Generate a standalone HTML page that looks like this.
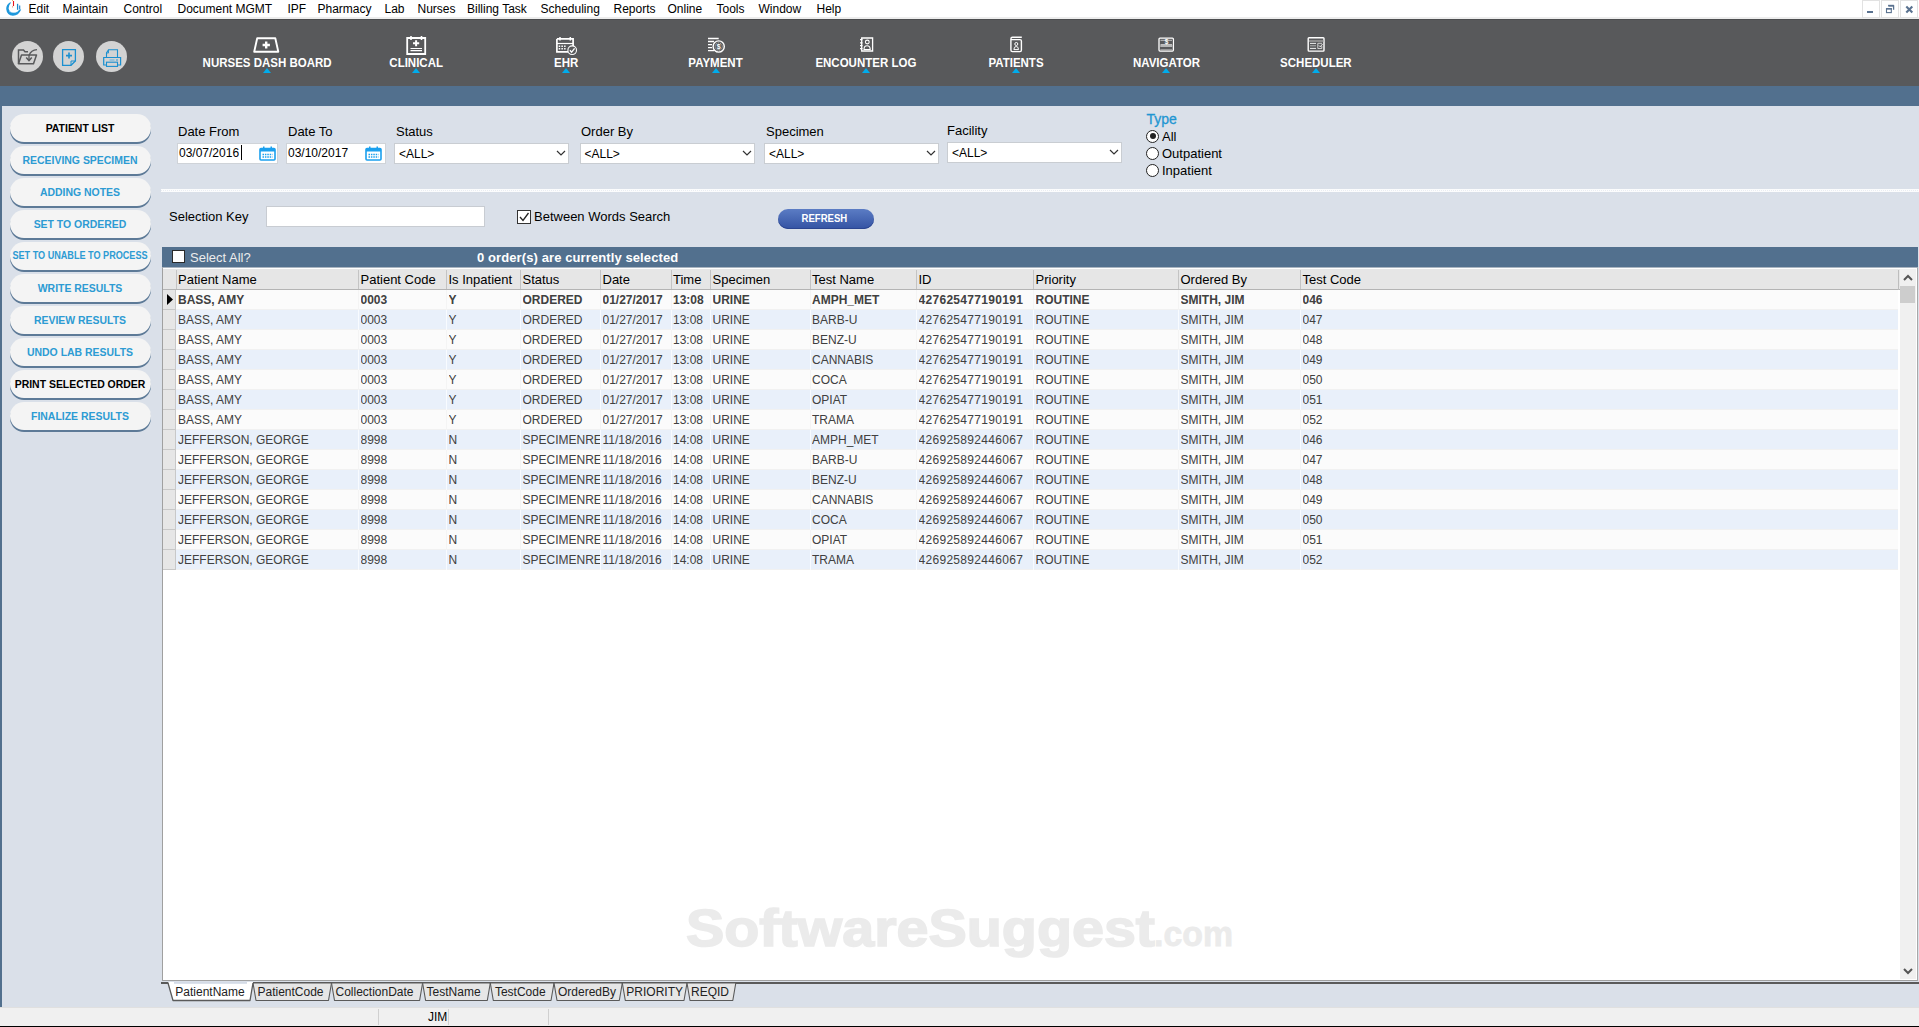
<!DOCTYPE html><html><head><meta charset='utf-8'><style>
*{box-sizing:border-box}
html,body{margin:0;padding:0}
body{width:1919px;height:1027px;overflow:hidden;position:relative;background:#dae0e9;font-family:"Liberation Sans", sans-serif;color:#000}
.a{position:absolute;white-space:nowrap}
.menu{top:1px;height:17px;line-height:17px;font-size:12px;color:#000}
.nav{top:56px;height:14px;line-height:14px;font-size:12.5px;font-weight:bold;color:#fff;transform-origin:center;}
.tri{position:absolute;top:68px;width:0;height:0;border-left:4.5px solid transparent;border-right:4.5px solid transparent;border-bottom:5.5px solid #00acec}
.circ{position:absolute;top:41px;width:31px;height:31px;border-radius:50%;background:#d3d3d3}
.lbtn{position:absolute;white-space:nowrap;left:10px;width:141px;height:28px;border-radius:14px;background:#f4f4f4;box-shadow:0 2px 0 #5d7a97;text-align:center;font-size:11px;font-weight:bold;line-height:28px;color:#2d9bd3}
.lbl{font-size:13px;color:#000;height:16px;line-height:16px}
.inp{position:absolute;height:21px;background:#fff;border:1px solid #cfd3d8}
.sel{position:absolute;height:21px;background:#fff;border:1px solid #c9cdd2;font-size:12px;line-height:20px;padding-left:4px}
.hdr{position:absolute;top:270px;height:20px;line-height:20px;font-size:13px;color:#000}
.cell{position:absolute;height:20px;line-height:20px;font-size:12px;color:#404040}
.tab{position:absolute;top:984px;height:17px;line-height:17px;font-size:12px;color:#222}
</style></head><body>
<div class='a' style='left:0;top:0;width:1919px;height:17px;background:#fff'></div>
<div class='a' style='left:0;top:17px;width:1919px;height:2px;background:#ededed'></div>
<svg class='a' style='left:0;top:0' width='26' height='17' viewBox='0 0 26 17'>
<path d='M10.5 2 Q6 4.5 6.2 9 Q6.8 15.2 13 15.8 Q18.5 15.8 21.2 9.6 L19.6 9.2 Q17.3 12.8 13.2 12.6 Q9 12.2 8.6 8.2 Q8.6 5 10.8 3 Z' fill='#1e98dc'/>
<path d='M17.6 3.8 V9.8' stroke='#1a8ad0' stroke-width='1.3'/>
<path d='M19.7 5.5 V9' stroke='#1a80c8' stroke-width='1.1'/>
<path d='M9 11.5 Q13 13.5 18 11.5' stroke='#fff' stroke-width='0.6' fill='none' opacity='0.7'/>
<path d='M13.5 1 V6' stroke='#e8141c' stroke-width='1.1'/>
<path d='M12.5 0 V1' stroke='#e8a040' stroke-width='0.8'/>
<path d='M12.6 6 V7.6' stroke='#e09070' stroke-width='0.8'/>
</svg>
<div class='a menu' style='left:28.5px'>Edit</div>
<div class='a menu' style='left:62.5px'>Maintain</div>
<div class='a menu' style='left:123.5px'>Control</div>
<div class='a menu' style='left:177.5px'>Document MGMT</div>
<div class='a menu' style='left:287.5px'>IPF</div>
<div class='a menu' style='left:317.5px'>Pharmacy</div>
<div class='a menu' style='left:384.5px'>Lab</div>
<div class='a menu' style='left:417.5px'>Nurses</div>
<div class='a menu' style='left:467px'>Billing Task</div>
<div class='a menu' style='left:540.5px'>Scheduling</div>
<div class='a menu' style='left:613.5px'>Reports</div>
<div class='a menu' style='left:667.5px'>Online</div>
<div class='a menu' style='left:716.5px'>Tools</div>
<div class='a menu' style='left:758.5px'>Window</div>
<div class='a menu' style='left:816.5px'>Help</div>
<div class='a' style='left:1862px;top:0;width:18px;height:18px;border:1px solid #e2e2e2;background:#fff'></div>
<div class='a' style='left:1881px;top:0;width:18px;height:18px;border:1px solid #e2e2e2;background:#fff'></div>
<div class='a' style='left:1900px;top:0;width:18px;height:18px;border:1px solid #e2e2e2;background:#fff'></div>
<div class='a' style='left:1867px;top:11px;width:6px;height:2px;background:#5a7290'></div>
<svg class='a' style='left:1884px;top:4px' width='12' height='11' viewBox='1884 4 12 11'><path d='M1888.6 5.8 H1893.6 V9.8' fill='none' stroke='#5a7290' stroke-width='1.3'/><path d='M1888.1 5.6 H1893.9' stroke='#5a7290' stroke-width='1.6'/><rect x='1886.5' y='8.6' width='4.8' height='4' fill='none' stroke='#5a7290' stroke-width='1.1'/><path d='M1886 8.8 H1891.8' stroke='#5a7290' stroke-width='1.6'/></svg>
<svg class='a' style='left:1904px;top:5px' width='10' height='10' viewBox='1904 5 10 10'><path d='M1906.3 6.5 L1912.3 12.5 M1912.3 6.5 L1906.3 12.5' stroke='#5a7290' stroke-width='2.1'/></svg>
<div class='a' style='left:0;top:19px;width:1919px;height:67px;background:#58595b;border-top:1px solid #4d4e50'></div>
<div class='a' style='left:0;top:86px;width:1919px;height:20px;background:#52708e'></div>
<div class='circ' style='left:12.0px'></div>
<div class='circ' style='left:53.0px'></div>
<div class='circ' style='left:96.0px'></div>
<svg class='a' style='left:250px;top:34px' width='32' height='20' viewBox='250 34 32 20'>
<path d='M257.2 38.2 L275.3 38.2 L278.3 51.7 L254.2 51.7 Z' fill='none' stroke='#ffffff' stroke-width='1.9' stroke-linejoin='round'/>
<path d='M262.6 45 H269.9 M266.2 41.4 V48.6' stroke='#ffffff' stroke-width='2.4'/></svg>
<svg class='a' style='left:404px;top:34px' width='26' height='22' viewBox='404 34 26 22'>
<path d='M407.2 38 H425.2 V54 H407.2 Z' fill='none' stroke='#ffffff' stroke-width='1.8'/>
<path d='M411 36 V40 M421.5 36 V40' stroke='#ffffff' stroke-width='1.6'/>
<path d='M413 43.2 H419.2 M416.1 40.2 V46.2' stroke='#ffffff' stroke-width='2'/>
<path d='M410.5 48.5 H422 M410.5 50.6 H422' stroke='#ffffff' stroke-width='1.2'/></svg>
<svg class='a' style='left:553px;top:34px' width='28' height='22' viewBox='553 34 28 22'>
<path d='M556.9 38.9 H573.1 V49 M568 51.8 H556.9 V38.9' fill='none' stroke='#ffffff' stroke-width='1.7'/>
<path d='M556.9 43.5 H573.1' stroke='#ffffff' stroke-width='1.2'/>
<path d='M560 37 V40.5 M570.3 37 V40.5' stroke='#ffffff' stroke-width='1.5'/>
<path d='M558.7 46.2 H566.5 M558.7 48.7 H566.5' stroke='#ffffff' stroke-width='1.4' stroke-dasharray='1.5 1.2'/>
<circle cx='572.2' cy='50.2' r='4.3' fill='#58595b' stroke='#ffffff' stroke-width='1.1'/>
<path d='M569.9 50.3 L571.6 52.2 L574.6 48.3' fill='none' stroke='#ffffff' stroke-width='1.3'/></svg>
<svg class='a' style='left:704px;top:34px' width='24' height='22' viewBox='704 34 24 22'>
<path d='M708 38.5 H718.7 M708 41.5 H714 M708 44.6 H712 M708 47.6 H712 M708 50.6 H714' stroke='#ffffff' stroke-width='1.4'/>
<circle cx='718.7' cy='46.5' r='5.6' fill='#58595b' stroke='#ffffff' stroke-width='1.4'/>
<circle cx='718.7' cy='46.5' r='3.6' fill='none' stroke='#ffffff' stroke-width='0.6' stroke-dasharray='1 1'/>
<text x='718.7' y='49' font-size='7' font-family='Liberation Sans' font-weight='bold' fill='#ffffff' text-anchor='middle'>$</text></svg>
<svg class='a' style='left:857px;top:34px' width='20' height='20' viewBox='857 34 20 20'>
<path d='M861.7 38 H872.6 V51 H861.7 Z' fill='none' stroke='#ffffff' stroke-width='1.3'/>
<path d='M860 39.7 H862.5 M860 42.8 H862.5 M860 45.7 H862.5 M860 48.6 H862.5' stroke='#ffffff' stroke-width='1.3'/>
<circle cx='867.3' cy='42' r='1.9' fill='none' stroke='#ffffff' stroke-width='1.1'/>
<path d='M864 49.5 Q864 45.8 867 45.8 Q870.2 45.8 870.2 49.5 Z' fill='none' stroke='#ffffff' stroke-width='1.1'/></svg>
<svg class='a' style='left:1007px;top:34px' width='18' height='20' viewBox='1007 34 18 20'>
<path d='M1021.8 37.3 H1012.5 Q1010.9 37.3 1010.9 39 V50 Q1010.9 51.6 1012.5 51.6 H1020 Q1021.4 51.6 1021.4 50 V41 Q1021.4 39.6 1020 39.6 H1011.5' fill='none' stroke='#ffffff' stroke-width='1.4'/>
<circle cx='1016.3' cy='44' r='1.5' fill='none' stroke='#ffffff' stroke-width='1'/>
<path d='M1013.9 49.6 Q1013.9 46.5 1016.2 46.5 Q1018.5 46.5 1018.5 49.6 Z' fill='none' stroke='#ffffff' stroke-width='1'/></svg>
<svg class='a' style='left:1155px;top:34px' width='22' height='20' viewBox='1155 34 22 20'>
<rect x='1159' y='38.1' width='14.4' height='13' rx='1' fill='none' stroke='#ffffff' stroke-width='1.3'/>

<rect x='1160' y='40' width='12.5' height='4.6' fill='#58595b'/>
<path d='M1160.5 40.3 H1172 M1160.5 44.5 H1172' stroke='#ddd' stroke-width='0.8'/>
<text x='1166.5' y='44.3' font-size='6.5' font-family='Liberation Sans' font-weight='bold' fill='#ffffff' text-anchor='middle'>$</text>
<path d='M1160.3 46 H1172.2' stroke='#e0e0e0' stroke-width='1.4'/>
<path d='M1160.3 50 H1172.2' stroke='#b8b8b8' stroke-width='1.3'/></svg>
<svg class='a' style='left:1305px;top:34px' width='22' height='20' viewBox='1305 34 22 20'>
<rect x='1308.2' y='37.8' width='15.8' height='13.3' rx='0.8' fill='none' stroke='#ffffff' stroke-width='1.4'/>
<path d='M1309 41 H1323.5' stroke='#9a9a9a' stroke-width='1.6'/>
<path d='M1310 43.4 H1316 M1310 48.4 H1316' stroke='#ffffff' stroke-width='0.9'/>
<path d='M1310 45.8 H1316' stroke='#bbb' stroke-width='0.9'/>
<path d='M1322 43.3 H1317.8 V48.5 H1321.8 V46' fill='none' stroke='#ddd' stroke-width='0.9'/>
<path d='M1319 45.5 L1320.2 46.8 L1322.6 44' fill='none' stroke='#ffffff' stroke-width='0.9'/></svg>
<svg class='a' style='left:12px;top:41px' width='31' height='31' viewBox='12 41 31 31'>
<path d='M18.5 63.8 V50 H23.5 L25 51.8 H28' fill='none' stroke='#58595b' stroke-width='1.5'/>
<path d='M18.5 63.8 L21.5 55 H36.5 L33.5 63.8 Z' fill='none' stroke='#58595b' stroke-width='1.5' stroke-linejoin='round'/>
<path d='M37 49.7 Q31 50 29 55.5 V60' fill='none' stroke='#58595b' stroke-width='1.3'/>
<path d='M26.2 57.6 L29 60.6 L31.8 57.6' fill='none' stroke='#58595b' stroke-width='1.5'/></svg>
<svg class='a' style='left:53px;top:41px' width='31' height='31' viewBox='53 41 31 31'>
<path d='M62.6 49.6 H75.4 V61 L71 65.3 H62.6 Z' fill='none' stroke='#1a8fd0' stroke-width='1.3'/>
<path d='M75.4 61 H71 V65.3' fill='none' stroke='#1a8fd0' stroke-width='1'/>
<path d='M66 55.6 H72 M69 52.6 V58.6' stroke='#1a8fd0' stroke-width='1.6'/></svg>
<svg class='a' style='left:96px;top:41px' width='31' height='31' viewBox='96 41 31 31'>
<path d='M106.5 57 V53 L108.5 49.8 H117.5 V57' fill='none' stroke='#1a8fd0' stroke-width='1.1'/>
<path d='M106.5 53 H108.5 V50' fill='none' stroke='#1a8fd0' stroke-width='0.9'/>
<path d='M106 65 H103.7 V57.5 H120.6 V65 H118' fill='none' stroke='#1a8fd0' stroke-width='1.2'/>
<rect x='106.5' y='62.2' width='11' height='4.2' fill='none' stroke='#1a8fd0' stroke-width='1.1'/>
<path d='M109.5 60 H114.5' stroke='#6fb7e0' stroke-width='1.2'/>
<circle cx='117' cy='60' r='0.8' fill='#1a8fd0'/></svg>
<div class='a nav' style='left:167px;width:200px;text-align:center'><span style='display:inline-block;transform:scaleX(0.92)'>NURSES DASH BOARD</span></div>
<div class='tri' style='left:262.5px'></div>
<div class='a nav' style='left:316px;width:200px;text-align:center'><span style='display:inline-block;transform:scaleX(0.92)'>CLINICAL</span></div>
<div class='tri' style='left:411.5px'></div>
<div class='a nav' style='left:466px;width:200px;text-align:center'><span style='display:inline-block;transform:scaleX(0.92)'>EHR</span></div>
<div class='tri' style='left:561.5px'></div>
<div class='a nav' style='left:616px;width:200px;text-align:center'><span style='display:inline-block;transform:scaleX(0.92)'>PAYMENT</span></div>
<div class='tri' style='left:711.5px'></div>
<div class='a nav' style='left:766px;width:200px;text-align:center'><span style='display:inline-block;transform:scaleX(0.92)'>ENCOUNTER LOG</span></div>
<div class='tri' style='left:861.5px'></div>
<div class='a nav' style='left:916px;width:200px;text-align:center'><span style='display:inline-block;transform:scaleX(0.92)'>PATIENTS</span></div>
<div class='tri' style='left:1011.5px'></div>
<div class='a nav' style='left:1066px;width:200px;text-align:center'><span style='display:inline-block;transform:scaleX(0.92)'>NAVIGATOR</span></div>
<div class='tri' style='left:1161.5px'></div>
<div class='a nav' style='left:1216px;width:200px;text-align:center'><span style='display:inline-block;transform:scaleX(0.92)'>SCHEDULER</span></div>
<div class='tri' style='left:1311.5px'></div>
<div class='a' style='left:0;top:106px;width:2px;height:901px;background:#52708e'></div>
<div class='lbtn' style='top:114px;color:#000;font-size:11px'><span style='position:absolute;left:calc(50% - 1px);top:0;transform:translateX(-50%) scaleX(0.95)'>PATIENT LIST</span></div>
<div class='lbtn' style='top:146px;color:#2d9bd3;font-size:11px'><span style='position:absolute;left:calc(50% - 1px);top:0;transform:translateX(-50%) scaleX(0.95)'>RECEIVING SPECIMEN</span></div>
<div class='lbtn' style='top:178px;color:#2d9bd3;font-size:11px'><span style='position:absolute;left:calc(50% - 1px);top:0;transform:translateX(-50%) scaleX(0.95)'>ADDING NOTES</span></div>
<div class='lbtn' style='top:210px;color:#2d9bd3;font-size:11px'><span style='position:absolute;left:calc(50% - 1px);top:0;transform:translateX(-50%) scaleX(0.95)'>SET TO ORDERED</span></div>
<div class='lbtn' style='top:242px;color:#2d9bd3;font-size:10px'><span style='position:absolute;left:calc(50% - 1px);top:0;transform:translateX(-50%) scaleX(0.91)'>SET TO UNABLE TO PROCESS</span></div>
<div class='lbtn' style='top:274px;color:#2d9bd3;font-size:11px'><span style='position:absolute;left:calc(50% - 1px);top:0;transform:translateX(-50%) scaleX(0.95)'>WRITE RESULTS</span></div>
<div class='lbtn' style='top:306px;color:#2d9bd3;font-size:11px'><span style='position:absolute;left:calc(50% - 1px);top:0;transform:translateX(-50%) scaleX(0.95)'>REVIEW RESULTS</span></div>
<div class='lbtn' style='top:338px;color:#2d9bd3;font-size:11px'><span style='position:absolute;left:calc(50% - 1px);top:0;transform:translateX(-50%) scaleX(0.95)'>UNDO LAB RESULTS</span></div>
<div class='lbtn' style='top:370px;color:#000;font-size:11px'><span style='position:absolute;left:calc(50% - 1px);top:0;transform:translateX(-50%) scaleX(0.95)'>PRINT SELECTED ORDER</span></div>
<div class='lbtn' style='top:402px;color:#2d9bd3;font-size:11px'><span style='position:absolute;left:calc(50% - 1px);top:0;transform:translateX(-50%) scaleX(0.95)'>FINALIZE RESULTS</span></div>
<div class='a lbl' style='left:178px;top:124px'>Date From</div>
<div class='a lbl' style='left:288px;top:124px'>Date To</div>
<div class='a lbl' style='left:396px;top:124px'>Status</div>
<div class='a lbl' style='left:581px;top:124px'>Order By</div>
<div class='a lbl' style='left:766px;top:124px'>Specimen</div>
<div class='a lbl' style='left:947px;top:123px'>Facility</div>
<div class='inp' style='left:177px;top:143px;width:101px'></div>
<div class='a' style='left:179px;top:143px;height:21px;line-height:21px;font-size:12px'>03/07/2016</div>
<div class='a' style='left:241px;top:145px;width:1px;height:15px;background:#000'></div>
<svg class='a' style='left:259px;top:146px' width='17' height='15' viewBox='0 0 17 15'>
<rect x='1' y='2.5' width='15' height='11.5' rx='1' fill='none' stroke='#1ba0ee' stroke-width='1.6'/>
<rect x='1' y='2.5' width='15' height='3' fill='#1ba0ee'/>
<rect x='4' y='0.5' width='1.5' height='3' fill='#1ba0ee'/><rect x='11.5' y='0.5' width='1.5' height='3' fill='#1ba0ee'/>
<path d='M3.5 8.5 H13.5 M3.5 11 H13.5' stroke='#1ba0ee' stroke-width='1.4' stroke-dasharray='1.5 0.9'/>
</svg>
<div class='inp' style='left:286px;top:143px;width:100px'></div>
<div class='a' style='left:288px;top:143px;height:21px;line-height:21px;font-size:12px'>03/10/2017</div>
<svg class='a' style='left:365px;top:146px' width='17' height='15' viewBox='0 0 17 15'>
<rect x='1' y='2.5' width='15' height='11.5' rx='1' fill='none' stroke='#1ba0ee' stroke-width='1.6'/>
<rect x='1' y='2.5' width='15' height='3' fill='#1ba0ee'/>
<rect x='4' y='0.5' width='1.5' height='3' fill='#1ba0ee'/><rect x='11.5' y='0.5' width='1.5' height='3' fill='#1ba0ee'/>
<path d='M3.5 8.5 H13.5 M3.5 11 H13.5' stroke='#1ba0ee' stroke-width='1.4' stroke-dasharray='1.5 0.9'/>
</svg>
<div class='sel' style='left:394px;top:143px;width:175px'>&lt;ALL&gt;</div>
<svg class='a' style='left:556px;top:150px' width='10' height='7'><path d='M1 1 L5 5 L9 1' fill='none' stroke='#333' stroke-width='1.2'/></svg>
<div class='sel' style='left:579.5px;top:143px;width:175px'>&lt;ALL&gt;</div>
<svg class='a' style='left:741.5px;top:150px' width='10' height='7'><path d='M1 1 L5 5 L9 1' fill='none' stroke='#333' stroke-width='1.2'/></svg>
<div class='sel' style='left:764px;top:143px;width:175px'>&lt;ALL&gt;</div>
<svg class='a' style='left:926px;top:150px' width='10' height='7'><path d='M1 1 L5 5 L9 1' fill='none' stroke='#333' stroke-width='1.2'/></svg>
<div class='sel' style='left:947px;top:142px;width:175px'>&lt;ALL&gt;</div>
<svg class='a' style='left:1109px;top:149px' width='10' height='7'><path d='M1 1 L5 5 L9 1' fill='none' stroke='#333' stroke-width='1.2'/></svg>
<div class='a' style='left:1146.5px;top:111px;height:16px;line-height:16px;font-size:14px;font-weight:normal;color:#1f96d2;-webkit-text-stroke:0.3px #1f96d2'>Type</div>
<div class='a' style='left:1146px;top:129.5px;width:13px;height:13px;border-radius:50%;border:1.3px solid #222;background:#fff'></div>
<div class='a' style='left:1149.5px;top:133px;width:6px;height:6px;border-radius:50%;background:#222'></div>
<div class='a' style='left:1162px;top:128.5px;height:16px;line-height:16px;font-size:13px'>All</div>
<div class='a' style='left:1146px;top:146.5px;width:13px;height:13px;border-radius:50%;border:1.3px solid #222;background:#fff'></div>
<div class='a' style='left:1162px;top:145.5px;height:16px;line-height:16px;font-size:13px'>Outpatient</div>
<div class='a' style='left:1146px;top:163.5px;width:13px;height:13px;border-radius:50%;border:1.3px solid #222;background:#fff'></div>
<div class='a' style='left:1162px;top:162.5px;height:16px;line-height:16px;font-size:13px'>Inpatient</div>
<div class='a' style='left:161px;top:189px;width:1758px;height:3px;background:#fbfcfd'></div>
<div class='a' style='left:161px;top:190px;width:1758px;height:1px;background:repeating-linear-gradient(90deg,#e9edf2 0 1px,#fdfdfe 1px 2px)'></div>
<div class='a lbl' style='left:169px;top:209px'>Selection Key</div>
<div class='inp' style='left:266px;top:206px;width:219px;height:21px;border-color:#c8ccd2'></div>
<div class='a' style='left:517px;top:210px;width:14px;height:14px;border:1px solid #333;background:#fff'></div>
<svg class='a' style='left:518px;top:211px' width='12' height='12'><path d='M2 6 L5 9.5 L10.5 2' fill='none' stroke='#222' stroke-width='1.3'/></svg>
<div class='a lbl' style='left:534px;top:209px'>Between Words Search</div>
<div class='a' style='left:778px;top:209px;width:96px;height:20px;border-radius:10px;background:linear-gradient(#5b7cc4,#3453a3);box-shadow:inset 0 -1px 0 #2b4590;color:#fff;font-size:11px;font-weight:bold;text-align:center;line-height:19px;text-indent:-2px'><span style='display:inline-block;transform:scaleX(0.87)'>REFRESH</span></div>
<div class='a' style='left:162px;top:247px;width:1756px;height:20px;background:#52708e'></div>
<div class='a' style='left:172px;top:250px;width:13px;height:13px;border:1px solid #2a2a2a;background:#fff'></div>
<div class='a' style='left:190px;top:250px;height:16px;line-height:16px;font-size:13px;color:#ececec'>Select All?</div>
<div class='a' style='left:477px;top:250px;height:16px;line-height:16px;font-size:13px;font-weight:bold;color:#fff;letter-spacing:0.1px'>0 order(s) are currently selected</div>
<div class='a' style='left:162px;top:267px;width:1756px;height:714px;background:#fff;border-left:1px solid #a0a0a0;border-right:1px solid #a8a8a8;border-bottom:1px solid #a0a0a0;border-top:1px solid #a9b4c0'></div>
<div class='a' style='left:1918px;top:267px;width:1px;height:714px;background:#dae0e9'></div>
<div class='a' style='left:161px;top:982px;width:1758px;height:2px;background:#5a5a5a'></div>
<div class='a' style='left:163px;top:269px;width:1737px;height:21px;background:#e6e6e6;border-bottom:1px solid #b4b4b4'></div>
<div class='a' style='left:176px;top:270px;width:1px;height:19px;background:#c4c4c4'></div>
<div class='a' style='left:358px;top:270px;width:1px;height:19px;background:#c4c4c4'></div>
<div class='a' style='left:446px;top:270px;width:1px;height:19px;background:#c4c4c4'></div>
<div class='a' style='left:520px;top:270px;width:1px;height:19px;background:#c4c4c4'></div>
<div class='a' style='left:600px;top:270px;width:1px;height:19px;background:#c4c4c4'></div>
<div class='a' style='left:670.5px;top:270px;width:1px;height:19px;background:#c4c4c4'></div>
<div class='a' style='left:710px;top:270px;width:1px;height:19px;background:#c4c4c4'></div>
<div class='a' style='left:809.5px;top:270px;width:1px;height:19px;background:#c4c4c4'></div>
<div class='a' style='left:916px;top:270px;width:1px;height:19px;background:#c4c4c4'></div>
<div class='a' style='left:1033px;top:270px;width:1px;height:19px;background:#c4c4c4'></div>
<div class='a' style='left:1178px;top:270px;width:1px;height:19px;background:#c4c4c4'></div>
<div class='a' style='left:1300px;top:270px;width:1px;height:19px;background:#c4c4c4'></div>
<div class='a' style='left:1898px;top:270px;width:1px;height:20px;background:#bdbdbd'></div>
<div class='hdr' style='left:178px'>Patient Name</div>
<div class='hdr' style='left:360.5px'>Patient Code</div>
<div class='hdr' style='left:448.5px'>Is Inpatient</div>
<div class='hdr' style='left:522.5px'>Status</div>
<div class='hdr' style='left:602.5px'>Date</div>
<div class='hdr' style='left:673.0px'>Time</div>
<div class='hdr' style='left:712.5px'>Specimen</div>
<div class='hdr' style='left:812.0px'>Test Name</div>
<div class='hdr' style='left:918.5px'>ID</div>
<div class='hdr' style='left:1035.5px'>Priority</div>
<div class='hdr' style='left:1180.5px'>Ordered By</div>
<div class='hdr' style='left:1302.5px'>Test Code</div>
<div class='a' style='left:176px;top:290px;width:1722px;height:20px;background:#fbfbfb;border-bottom:1px solid #f1f1f1'></div>
<div class='a' style='left:163px;top:290px;width:13px;height:20px;background:#e6e6e6;border-bottom:1px solid #c8c8c8;border-right:1px solid #c8c8c8'></div>
<div class='a' style='left:358px;top:290px;width:1px;height:20px;background:#f4f4f4'></div>
<div class='a' style='left:446px;top:290px;width:1px;height:20px;background:#f4f4f4'></div>
<div class='a' style='left:520px;top:290px;width:1px;height:20px;background:#f4f4f4'></div>
<div class='a' style='left:600px;top:290px;width:1px;height:20px;background:#f4f4f4'></div>
<div class='a' style='left:670.5px;top:290px;width:1px;height:20px;background:#f4f4f4'></div>
<div class='a' style='left:710px;top:290px;width:1px;height:20px;background:#f4f4f4'></div>
<div class='a' style='left:809.5px;top:290px;width:1px;height:20px;background:#f4f4f4'></div>
<div class='a' style='left:916px;top:290px;width:1px;height:20px;background:#f4f4f4'></div>
<div class='a' style='left:1033px;top:290px;width:1px;height:20px;background:#f4f4f4'></div>
<div class='a' style='left:1178px;top:290px;width:1px;height:20px;background:#f4f4f4'></div>
<div class='a' style='left:1300px;top:290px;width:1px;height:20px;background:#f4f4f4'></div>
<div class='cell' style='left:178px;top:290px;width:180px;overflow:hidden;font-weight:bold;'>BASS, AMY</div>
<div class='cell' style='left:360.5px;top:290px;width:85.5px;overflow:hidden;font-weight:bold;'>0003</div>
<div class='cell' style='left:448.5px;top:290px;width:71.5px;overflow:hidden;font-weight:bold;'>Y</div>
<div class='cell' style='left:522.5px;top:290px;width:77.5px;overflow:hidden;font-weight:bold;'>ORDERED</div>
<div class='cell' style='left:602.5px;top:290px;width:68.0px;overflow:hidden;font-weight:bold;'>01/27/2017</div>
<div class='cell' style='left:673.0px;top:290px;width:37.0px;overflow:hidden;font-weight:bold;'>13:08</div>
<div class='cell' style='left:712.5px;top:290px;width:97.0px;overflow:hidden;font-weight:bold;'>URINE</div>
<div class='cell' style='left:812.0px;top:290px;width:104.0px;overflow:hidden;font-weight:bold;'>AMPH_MET</div>
<div class='cell' style='left:918.5px;top:290px;width:114.5px;overflow:hidden;font-weight:bold;letter-spacing:0.3px;'>427625477190191</div>
<div class='cell' style='left:1035.5px;top:290px;width:142.5px;overflow:hidden;font-weight:bold;'>ROUTINE</div>
<div class='cell' style='left:1180.5px;top:290px;width:119.5px;overflow:hidden;font-weight:bold;'>SMITH, JIM</div>
<div class='cell' style='left:1302.5px;top:290px;width:595.5px;overflow:hidden;font-weight:bold;'>046</div>
<div class='a' style='left:176px;top:310px;width:1722px;height:20px;background:#e9f0fa;border-bottom:1px solid #f1f1f1'></div>
<div class='a' style='left:163px;top:310px;width:13px;height:20px;background:#e6e6e6;border-bottom:1px solid #c8c8c8;border-right:1px solid #c8c8c8'></div>
<div class='a' style='left:358px;top:310px;width:1px;height:20px;background:#f8fbff'></div>
<div class='a' style='left:446px;top:310px;width:1px;height:20px;background:#f8fbff'></div>
<div class='a' style='left:520px;top:310px;width:1px;height:20px;background:#f8fbff'></div>
<div class='a' style='left:600px;top:310px;width:1px;height:20px;background:#f8fbff'></div>
<div class='a' style='left:670.5px;top:310px;width:1px;height:20px;background:#f8fbff'></div>
<div class='a' style='left:710px;top:310px;width:1px;height:20px;background:#f8fbff'></div>
<div class='a' style='left:809.5px;top:310px;width:1px;height:20px;background:#f8fbff'></div>
<div class='a' style='left:916px;top:310px;width:1px;height:20px;background:#f8fbff'></div>
<div class='a' style='left:1033px;top:310px;width:1px;height:20px;background:#f8fbff'></div>
<div class='a' style='left:1178px;top:310px;width:1px;height:20px;background:#f8fbff'></div>
<div class='a' style='left:1300px;top:310px;width:1px;height:20px;background:#f8fbff'></div>
<div class='cell' style='left:178px;top:310px;width:180px;overflow:hidden;font-weight:normal;'>BASS, AMY</div>
<div class='cell' style='left:360.5px;top:310px;width:85.5px;overflow:hidden;font-weight:normal;'>0003</div>
<div class='cell' style='left:448.5px;top:310px;width:71.5px;overflow:hidden;font-weight:normal;'>Y</div>
<div class='cell' style='left:522.5px;top:310px;width:77.5px;overflow:hidden;font-weight:normal;'>ORDERED</div>
<div class='cell' style='left:602.5px;top:310px;width:68.0px;overflow:hidden;font-weight:normal;'>01/27/2017</div>
<div class='cell' style='left:673.0px;top:310px;width:37.0px;overflow:hidden;font-weight:normal;'>13:08</div>
<div class='cell' style='left:712.5px;top:310px;width:97.0px;overflow:hidden;font-weight:normal;'>URINE</div>
<div class='cell' style='left:812.0px;top:310px;width:104.0px;overflow:hidden;font-weight:normal;'>BARB-U</div>
<div class='cell' style='left:918.5px;top:310px;width:114.5px;overflow:hidden;font-weight:normal;letter-spacing:0.3px;'>427625477190191</div>
<div class='cell' style='left:1035.5px;top:310px;width:142.5px;overflow:hidden;font-weight:normal;'>ROUTINE</div>
<div class='cell' style='left:1180.5px;top:310px;width:119.5px;overflow:hidden;font-weight:normal;'>SMITH, JIM</div>
<div class='cell' style='left:1302.5px;top:310px;width:595.5px;overflow:hidden;font-weight:normal;'>047</div>
<div class='a' style='left:176px;top:330px;width:1722px;height:20px;background:#fbfbfb;border-bottom:1px solid #f1f1f1'></div>
<div class='a' style='left:163px;top:330px;width:13px;height:20px;background:#e6e6e6;border-bottom:1px solid #c8c8c8;border-right:1px solid #c8c8c8'></div>
<div class='a' style='left:358px;top:330px;width:1px;height:20px;background:#f4f4f4'></div>
<div class='a' style='left:446px;top:330px;width:1px;height:20px;background:#f4f4f4'></div>
<div class='a' style='left:520px;top:330px;width:1px;height:20px;background:#f4f4f4'></div>
<div class='a' style='left:600px;top:330px;width:1px;height:20px;background:#f4f4f4'></div>
<div class='a' style='left:670.5px;top:330px;width:1px;height:20px;background:#f4f4f4'></div>
<div class='a' style='left:710px;top:330px;width:1px;height:20px;background:#f4f4f4'></div>
<div class='a' style='left:809.5px;top:330px;width:1px;height:20px;background:#f4f4f4'></div>
<div class='a' style='left:916px;top:330px;width:1px;height:20px;background:#f4f4f4'></div>
<div class='a' style='left:1033px;top:330px;width:1px;height:20px;background:#f4f4f4'></div>
<div class='a' style='left:1178px;top:330px;width:1px;height:20px;background:#f4f4f4'></div>
<div class='a' style='left:1300px;top:330px;width:1px;height:20px;background:#f4f4f4'></div>
<div class='cell' style='left:178px;top:330px;width:180px;overflow:hidden;font-weight:normal;'>BASS, AMY</div>
<div class='cell' style='left:360.5px;top:330px;width:85.5px;overflow:hidden;font-weight:normal;'>0003</div>
<div class='cell' style='left:448.5px;top:330px;width:71.5px;overflow:hidden;font-weight:normal;'>Y</div>
<div class='cell' style='left:522.5px;top:330px;width:77.5px;overflow:hidden;font-weight:normal;'>ORDERED</div>
<div class='cell' style='left:602.5px;top:330px;width:68.0px;overflow:hidden;font-weight:normal;'>01/27/2017</div>
<div class='cell' style='left:673.0px;top:330px;width:37.0px;overflow:hidden;font-weight:normal;'>13:08</div>
<div class='cell' style='left:712.5px;top:330px;width:97.0px;overflow:hidden;font-weight:normal;'>URINE</div>
<div class='cell' style='left:812.0px;top:330px;width:104.0px;overflow:hidden;font-weight:normal;'>BENZ-U</div>
<div class='cell' style='left:918.5px;top:330px;width:114.5px;overflow:hidden;font-weight:normal;letter-spacing:0.3px;'>427625477190191</div>
<div class='cell' style='left:1035.5px;top:330px;width:142.5px;overflow:hidden;font-weight:normal;'>ROUTINE</div>
<div class='cell' style='left:1180.5px;top:330px;width:119.5px;overflow:hidden;font-weight:normal;'>SMITH, JIM</div>
<div class='cell' style='left:1302.5px;top:330px;width:595.5px;overflow:hidden;font-weight:normal;'>048</div>
<div class='a' style='left:176px;top:350px;width:1722px;height:20px;background:#e9f0fa;border-bottom:1px solid #f1f1f1'></div>
<div class='a' style='left:163px;top:350px;width:13px;height:20px;background:#e6e6e6;border-bottom:1px solid #c8c8c8;border-right:1px solid #c8c8c8'></div>
<div class='a' style='left:358px;top:350px;width:1px;height:20px;background:#f8fbff'></div>
<div class='a' style='left:446px;top:350px;width:1px;height:20px;background:#f8fbff'></div>
<div class='a' style='left:520px;top:350px;width:1px;height:20px;background:#f8fbff'></div>
<div class='a' style='left:600px;top:350px;width:1px;height:20px;background:#f8fbff'></div>
<div class='a' style='left:670.5px;top:350px;width:1px;height:20px;background:#f8fbff'></div>
<div class='a' style='left:710px;top:350px;width:1px;height:20px;background:#f8fbff'></div>
<div class='a' style='left:809.5px;top:350px;width:1px;height:20px;background:#f8fbff'></div>
<div class='a' style='left:916px;top:350px;width:1px;height:20px;background:#f8fbff'></div>
<div class='a' style='left:1033px;top:350px;width:1px;height:20px;background:#f8fbff'></div>
<div class='a' style='left:1178px;top:350px;width:1px;height:20px;background:#f8fbff'></div>
<div class='a' style='left:1300px;top:350px;width:1px;height:20px;background:#f8fbff'></div>
<div class='cell' style='left:178px;top:350px;width:180px;overflow:hidden;font-weight:normal;'>BASS, AMY</div>
<div class='cell' style='left:360.5px;top:350px;width:85.5px;overflow:hidden;font-weight:normal;'>0003</div>
<div class='cell' style='left:448.5px;top:350px;width:71.5px;overflow:hidden;font-weight:normal;'>Y</div>
<div class='cell' style='left:522.5px;top:350px;width:77.5px;overflow:hidden;font-weight:normal;'>ORDERED</div>
<div class='cell' style='left:602.5px;top:350px;width:68.0px;overflow:hidden;font-weight:normal;'>01/27/2017</div>
<div class='cell' style='left:673.0px;top:350px;width:37.0px;overflow:hidden;font-weight:normal;'>13:08</div>
<div class='cell' style='left:712.5px;top:350px;width:97.0px;overflow:hidden;font-weight:normal;'>URINE</div>
<div class='cell' style='left:812.0px;top:350px;width:104.0px;overflow:hidden;font-weight:normal;'>CANNABIS</div>
<div class='cell' style='left:918.5px;top:350px;width:114.5px;overflow:hidden;font-weight:normal;letter-spacing:0.3px;'>427625477190191</div>
<div class='cell' style='left:1035.5px;top:350px;width:142.5px;overflow:hidden;font-weight:normal;'>ROUTINE</div>
<div class='cell' style='left:1180.5px;top:350px;width:119.5px;overflow:hidden;font-weight:normal;'>SMITH, JIM</div>
<div class='cell' style='left:1302.5px;top:350px;width:595.5px;overflow:hidden;font-weight:normal;'>049</div>
<div class='a' style='left:176px;top:370px;width:1722px;height:20px;background:#fbfbfb;border-bottom:1px solid #f1f1f1'></div>
<div class='a' style='left:163px;top:370px;width:13px;height:20px;background:#e6e6e6;border-bottom:1px solid #c8c8c8;border-right:1px solid #c8c8c8'></div>
<div class='a' style='left:358px;top:370px;width:1px;height:20px;background:#f4f4f4'></div>
<div class='a' style='left:446px;top:370px;width:1px;height:20px;background:#f4f4f4'></div>
<div class='a' style='left:520px;top:370px;width:1px;height:20px;background:#f4f4f4'></div>
<div class='a' style='left:600px;top:370px;width:1px;height:20px;background:#f4f4f4'></div>
<div class='a' style='left:670.5px;top:370px;width:1px;height:20px;background:#f4f4f4'></div>
<div class='a' style='left:710px;top:370px;width:1px;height:20px;background:#f4f4f4'></div>
<div class='a' style='left:809.5px;top:370px;width:1px;height:20px;background:#f4f4f4'></div>
<div class='a' style='left:916px;top:370px;width:1px;height:20px;background:#f4f4f4'></div>
<div class='a' style='left:1033px;top:370px;width:1px;height:20px;background:#f4f4f4'></div>
<div class='a' style='left:1178px;top:370px;width:1px;height:20px;background:#f4f4f4'></div>
<div class='a' style='left:1300px;top:370px;width:1px;height:20px;background:#f4f4f4'></div>
<div class='cell' style='left:178px;top:370px;width:180px;overflow:hidden;font-weight:normal;'>BASS, AMY</div>
<div class='cell' style='left:360.5px;top:370px;width:85.5px;overflow:hidden;font-weight:normal;'>0003</div>
<div class='cell' style='left:448.5px;top:370px;width:71.5px;overflow:hidden;font-weight:normal;'>Y</div>
<div class='cell' style='left:522.5px;top:370px;width:77.5px;overflow:hidden;font-weight:normal;'>ORDERED</div>
<div class='cell' style='left:602.5px;top:370px;width:68.0px;overflow:hidden;font-weight:normal;'>01/27/2017</div>
<div class='cell' style='left:673.0px;top:370px;width:37.0px;overflow:hidden;font-weight:normal;'>13:08</div>
<div class='cell' style='left:712.5px;top:370px;width:97.0px;overflow:hidden;font-weight:normal;'>URINE</div>
<div class='cell' style='left:812.0px;top:370px;width:104.0px;overflow:hidden;font-weight:normal;'>COCA</div>
<div class='cell' style='left:918.5px;top:370px;width:114.5px;overflow:hidden;font-weight:normal;letter-spacing:0.3px;'>427625477190191</div>
<div class='cell' style='left:1035.5px;top:370px;width:142.5px;overflow:hidden;font-weight:normal;'>ROUTINE</div>
<div class='cell' style='left:1180.5px;top:370px;width:119.5px;overflow:hidden;font-weight:normal;'>SMITH, JIM</div>
<div class='cell' style='left:1302.5px;top:370px;width:595.5px;overflow:hidden;font-weight:normal;'>050</div>
<div class='a' style='left:176px;top:390px;width:1722px;height:20px;background:#e9f0fa;border-bottom:1px solid #f1f1f1'></div>
<div class='a' style='left:163px;top:390px;width:13px;height:20px;background:#e6e6e6;border-bottom:1px solid #c8c8c8;border-right:1px solid #c8c8c8'></div>
<div class='a' style='left:358px;top:390px;width:1px;height:20px;background:#f8fbff'></div>
<div class='a' style='left:446px;top:390px;width:1px;height:20px;background:#f8fbff'></div>
<div class='a' style='left:520px;top:390px;width:1px;height:20px;background:#f8fbff'></div>
<div class='a' style='left:600px;top:390px;width:1px;height:20px;background:#f8fbff'></div>
<div class='a' style='left:670.5px;top:390px;width:1px;height:20px;background:#f8fbff'></div>
<div class='a' style='left:710px;top:390px;width:1px;height:20px;background:#f8fbff'></div>
<div class='a' style='left:809.5px;top:390px;width:1px;height:20px;background:#f8fbff'></div>
<div class='a' style='left:916px;top:390px;width:1px;height:20px;background:#f8fbff'></div>
<div class='a' style='left:1033px;top:390px;width:1px;height:20px;background:#f8fbff'></div>
<div class='a' style='left:1178px;top:390px;width:1px;height:20px;background:#f8fbff'></div>
<div class='a' style='left:1300px;top:390px;width:1px;height:20px;background:#f8fbff'></div>
<div class='cell' style='left:178px;top:390px;width:180px;overflow:hidden;font-weight:normal;'>BASS, AMY</div>
<div class='cell' style='left:360.5px;top:390px;width:85.5px;overflow:hidden;font-weight:normal;'>0003</div>
<div class='cell' style='left:448.5px;top:390px;width:71.5px;overflow:hidden;font-weight:normal;'>Y</div>
<div class='cell' style='left:522.5px;top:390px;width:77.5px;overflow:hidden;font-weight:normal;'>ORDERED</div>
<div class='cell' style='left:602.5px;top:390px;width:68.0px;overflow:hidden;font-weight:normal;'>01/27/2017</div>
<div class='cell' style='left:673.0px;top:390px;width:37.0px;overflow:hidden;font-weight:normal;'>13:08</div>
<div class='cell' style='left:712.5px;top:390px;width:97.0px;overflow:hidden;font-weight:normal;'>URINE</div>
<div class='cell' style='left:812.0px;top:390px;width:104.0px;overflow:hidden;font-weight:normal;'>OPIAT</div>
<div class='cell' style='left:918.5px;top:390px;width:114.5px;overflow:hidden;font-weight:normal;letter-spacing:0.3px;'>427625477190191</div>
<div class='cell' style='left:1035.5px;top:390px;width:142.5px;overflow:hidden;font-weight:normal;'>ROUTINE</div>
<div class='cell' style='left:1180.5px;top:390px;width:119.5px;overflow:hidden;font-weight:normal;'>SMITH, JIM</div>
<div class='cell' style='left:1302.5px;top:390px;width:595.5px;overflow:hidden;font-weight:normal;'>051</div>
<div class='a' style='left:176px;top:410px;width:1722px;height:20px;background:#fbfbfb;border-bottom:1px solid #f1f1f1'></div>
<div class='a' style='left:163px;top:410px;width:13px;height:20px;background:#e6e6e6;border-bottom:1px solid #c8c8c8;border-right:1px solid #c8c8c8'></div>
<div class='a' style='left:358px;top:410px;width:1px;height:20px;background:#f4f4f4'></div>
<div class='a' style='left:446px;top:410px;width:1px;height:20px;background:#f4f4f4'></div>
<div class='a' style='left:520px;top:410px;width:1px;height:20px;background:#f4f4f4'></div>
<div class='a' style='left:600px;top:410px;width:1px;height:20px;background:#f4f4f4'></div>
<div class='a' style='left:670.5px;top:410px;width:1px;height:20px;background:#f4f4f4'></div>
<div class='a' style='left:710px;top:410px;width:1px;height:20px;background:#f4f4f4'></div>
<div class='a' style='left:809.5px;top:410px;width:1px;height:20px;background:#f4f4f4'></div>
<div class='a' style='left:916px;top:410px;width:1px;height:20px;background:#f4f4f4'></div>
<div class='a' style='left:1033px;top:410px;width:1px;height:20px;background:#f4f4f4'></div>
<div class='a' style='left:1178px;top:410px;width:1px;height:20px;background:#f4f4f4'></div>
<div class='a' style='left:1300px;top:410px;width:1px;height:20px;background:#f4f4f4'></div>
<div class='cell' style='left:178px;top:410px;width:180px;overflow:hidden;font-weight:normal;'>BASS, AMY</div>
<div class='cell' style='left:360.5px;top:410px;width:85.5px;overflow:hidden;font-weight:normal;'>0003</div>
<div class='cell' style='left:448.5px;top:410px;width:71.5px;overflow:hidden;font-weight:normal;'>Y</div>
<div class='cell' style='left:522.5px;top:410px;width:77.5px;overflow:hidden;font-weight:normal;'>ORDERED</div>
<div class='cell' style='left:602.5px;top:410px;width:68.0px;overflow:hidden;font-weight:normal;'>01/27/2017</div>
<div class='cell' style='left:673.0px;top:410px;width:37.0px;overflow:hidden;font-weight:normal;'>13:08</div>
<div class='cell' style='left:712.5px;top:410px;width:97.0px;overflow:hidden;font-weight:normal;'>URINE</div>
<div class='cell' style='left:812.0px;top:410px;width:104.0px;overflow:hidden;font-weight:normal;'>TRAMA</div>
<div class='cell' style='left:918.5px;top:410px;width:114.5px;overflow:hidden;font-weight:normal;letter-spacing:0.3px;'>427625477190191</div>
<div class='cell' style='left:1035.5px;top:410px;width:142.5px;overflow:hidden;font-weight:normal;'>ROUTINE</div>
<div class='cell' style='left:1180.5px;top:410px;width:119.5px;overflow:hidden;font-weight:normal;'>SMITH, JIM</div>
<div class='cell' style='left:1302.5px;top:410px;width:595.5px;overflow:hidden;font-weight:normal;'>052</div>
<div class='a' style='left:176px;top:430px;width:1722px;height:20px;background:#e9f0fa;border-bottom:1px solid #f1f1f1'></div>
<div class='a' style='left:163px;top:430px;width:13px;height:20px;background:#e6e6e6;border-bottom:1px solid #c8c8c8;border-right:1px solid #c8c8c8'></div>
<div class='a' style='left:358px;top:430px;width:1px;height:20px;background:#f8fbff'></div>
<div class='a' style='left:446px;top:430px;width:1px;height:20px;background:#f8fbff'></div>
<div class='a' style='left:520px;top:430px;width:1px;height:20px;background:#f8fbff'></div>
<div class='a' style='left:600px;top:430px;width:1px;height:20px;background:#f8fbff'></div>
<div class='a' style='left:670.5px;top:430px;width:1px;height:20px;background:#f8fbff'></div>
<div class='a' style='left:710px;top:430px;width:1px;height:20px;background:#f8fbff'></div>
<div class='a' style='left:809.5px;top:430px;width:1px;height:20px;background:#f8fbff'></div>
<div class='a' style='left:916px;top:430px;width:1px;height:20px;background:#f8fbff'></div>
<div class='a' style='left:1033px;top:430px;width:1px;height:20px;background:#f8fbff'></div>
<div class='a' style='left:1178px;top:430px;width:1px;height:20px;background:#f8fbff'></div>
<div class='a' style='left:1300px;top:430px;width:1px;height:20px;background:#f8fbff'></div>
<div class='cell' style='left:178px;top:430px;width:180px;overflow:hidden;font-weight:normal;'>JEFFERSON, GEORGE</div>
<div class='cell' style='left:360.5px;top:430px;width:85.5px;overflow:hidden;font-weight:normal;'>8998</div>
<div class='cell' style='left:448.5px;top:430px;width:71.5px;overflow:hidden;font-weight:normal;'>N</div>
<div class='cell' style='left:522.5px;top:430px;width:77.5px;overflow:hidden;font-weight:normal;'>SPECIMENRE</div>
<div class='cell' style='left:602.5px;top:430px;width:68.0px;overflow:hidden;font-weight:normal;'>11/18/2016</div>
<div class='cell' style='left:673.0px;top:430px;width:37.0px;overflow:hidden;font-weight:normal;'>14:08</div>
<div class='cell' style='left:712.5px;top:430px;width:97.0px;overflow:hidden;font-weight:normal;'>URINE</div>
<div class='cell' style='left:812.0px;top:430px;width:104.0px;overflow:hidden;font-weight:normal;'>AMPH_MET</div>
<div class='cell' style='left:918.5px;top:430px;width:114.5px;overflow:hidden;font-weight:normal;letter-spacing:0.3px;'>426925892446067</div>
<div class='cell' style='left:1035.5px;top:430px;width:142.5px;overflow:hidden;font-weight:normal;'>ROUTINE</div>
<div class='cell' style='left:1180.5px;top:430px;width:119.5px;overflow:hidden;font-weight:normal;'>SMITH, JIM</div>
<div class='cell' style='left:1302.5px;top:430px;width:595.5px;overflow:hidden;font-weight:normal;'>046</div>
<div class='a' style='left:176px;top:450px;width:1722px;height:20px;background:#fbfbfb;border-bottom:1px solid #f1f1f1'></div>
<div class='a' style='left:163px;top:450px;width:13px;height:20px;background:#e6e6e6;border-bottom:1px solid #c8c8c8;border-right:1px solid #c8c8c8'></div>
<div class='a' style='left:358px;top:450px;width:1px;height:20px;background:#f4f4f4'></div>
<div class='a' style='left:446px;top:450px;width:1px;height:20px;background:#f4f4f4'></div>
<div class='a' style='left:520px;top:450px;width:1px;height:20px;background:#f4f4f4'></div>
<div class='a' style='left:600px;top:450px;width:1px;height:20px;background:#f4f4f4'></div>
<div class='a' style='left:670.5px;top:450px;width:1px;height:20px;background:#f4f4f4'></div>
<div class='a' style='left:710px;top:450px;width:1px;height:20px;background:#f4f4f4'></div>
<div class='a' style='left:809.5px;top:450px;width:1px;height:20px;background:#f4f4f4'></div>
<div class='a' style='left:916px;top:450px;width:1px;height:20px;background:#f4f4f4'></div>
<div class='a' style='left:1033px;top:450px;width:1px;height:20px;background:#f4f4f4'></div>
<div class='a' style='left:1178px;top:450px;width:1px;height:20px;background:#f4f4f4'></div>
<div class='a' style='left:1300px;top:450px;width:1px;height:20px;background:#f4f4f4'></div>
<div class='cell' style='left:178px;top:450px;width:180px;overflow:hidden;font-weight:normal;'>JEFFERSON, GEORGE</div>
<div class='cell' style='left:360.5px;top:450px;width:85.5px;overflow:hidden;font-weight:normal;'>8998</div>
<div class='cell' style='left:448.5px;top:450px;width:71.5px;overflow:hidden;font-weight:normal;'>N</div>
<div class='cell' style='left:522.5px;top:450px;width:77.5px;overflow:hidden;font-weight:normal;'>SPECIMENRE</div>
<div class='cell' style='left:602.5px;top:450px;width:68.0px;overflow:hidden;font-weight:normal;'>11/18/2016</div>
<div class='cell' style='left:673.0px;top:450px;width:37.0px;overflow:hidden;font-weight:normal;'>14:08</div>
<div class='cell' style='left:712.5px;top:450px;width:97.0px;overflow:hidden;font-weight:normal;'>URINE</div>
<div class='cell' style='left:812.0px;top:450px;width:104.0px;overflow:hidden;font-weight:normal;'>BARB-U</div>
<div class='cell' style='left:918.5px;top:450px;width:114.5px;overflow:hidden;font-weight:normal;letter-spacing:0.3px;'>426925892446067</div>
<div class='cell' style='left:1035.5px;top:450px;width:142.5px;overflow:hidden;font-weight:normal;'>ROUTINE</div>
<div class='cell' style='left:1180.5px;top:450px;width:119.5px;overflow:hidden;font-weight:normal;'>SMITH, JIM</div>
<div class='cell' style='left:1302.5px;top:450px;width:595.5px;overflow:hidden;font-weight:normal;'>047</div>
<div class='a' style='left:176px;top:470px;width:1722px;height:20px;background:#e9f0fa;border-bottom:1px solid #f1f1f1'></div>
<div class='a' style='left:163px;top:470px;width:13px;height:20px;background:#e6e6e6;border-bottom:1px solid #c8c8c8;border-right:1px solid #c8c8c8'></div>
<div class='a' style='left:358px;top:470px;width:1px;height:20px;background:#f8fbff'></div>
<div class='a' style='left:446px;top:470px;width:1px;height:20px;background:#f8fbff'></div>
<div class='a' style='left:520px;top:470px;width:1px;height:20px;background:#f8fbff'></div>
<div class='a' style='left:600px;top:470px;width:1px;height:20px;background:#f8fbff'></div>
<div class='a' style='left:670.5px;top:470px;width:1px;height:20px;background:#f8fbff'></div>
<div class='a' style='left:710px;top:470px;width:1px;height:20px;background:#f8fbff'></div>
<div class='a' style='left:809.5px;top:470px;width:1px;height:20px;background:#f8fbff'></div>
<div class='a' style='left:916px;top:470px;width:1px;height:20px;background:#f8fbff'></div>
<div class='a' style='left:1033px;top:470px;width:1px;height:20px;background:#f8fbff'></div>
<div class='a' style='left:1178px;top:470px;width:1px;height:20px;background:#f8fbff'></div>
<div class='a' style='left:1300px;top:470px;width:1px;height:20px;background:#f8fbff'></div>
<div class='cell' style='left:178px;top:470px;width:180px;overflow:hidden;font-weight:normal;'>JEFFERSON, GEORGE</div>
<div class='cell' style='left:360.5px;top:470px;width:85.5px;overflow:hidden;font-weight:normal;'>8998</div>
<div class='cell' style='left:448.5px;top:470px;width:71.5px;overflow:hidden;font-weight:normal;'>N</div>
<div class='cell' style='left:522.5px;top:470px;width:77.5px;overflow:hidden;font-weight:normal;'>SPECIMENRE</div>
<div class='cell' style='left:602.5px;top:470px;width:68.0px;overflow:hidden;font-weight:normal;'>11/18/2016</div>
<div class='cell' style='left:673.0px;top:470px;width:37.0px;overflow:hidden;font-weight:normal;'>14:08</div>
<div class='cell' style='left:712.5px;top:470px;width:97.0px;overflow:hidden;font-weight:normal;'>URINE</div>
<div class='cell' style='left:812.0px;top:470px;width:104.0px;overflow:hidden;font-weight:normal;'>BENZ-U</div>
<div class='cell' style='left:918.5px;top:470px;width:114.5px;overflow:hidden;font-weight:normal;letter-spacing:0.3px;'>426925892446067</div>
<div class='cell' style='left:1035.5px;top:470px;width:142.5px;overflow:hidden;font-weight:normal;'>ROUTINE</div>
<div class='cell' style='left:1180.5px;top:470px;width:119.5px;overflow:hidden;font-weight:normal;'>SMITH, JIM</div>
<div class='cell' style='left:1302.5px;top:470px;width:595.5px;overflow:hidden;font-weight:normal;'>048</div>
<div class='a' style='left:176px;top:490px;width:1722px;height:20px;background:#fbfbfb;border-bottom:1px solid #f1f1f1'></div>
<div class='a' style='left:163px;top:490px;width:13px;height:20px;background:#e6e6e6;border-bottom:1px solid #c8c8c8;border-right:1px solid #c8c8c8'></div>
<div class='a' style='left:358px;top:490px;width:1px;height:20px;background:#f4f4f4'></div>
<div class='a' style='left:446px;top:490px;width:1px;height:20px;background:#f4f4f4'></div>
<div class='a' style='left:520px;top:490px;width:1px;height:20px;background:#f4f4f4'></div>
<div class='a' style='left:600px;top:490px;width:1px;height:20px;background:#f4f4f4'></div>
<div class='a' style='left:670.5px;top:490px;width:1px;height:20px;background:#f4f4f4'></div>
<div class='a' style='left:710px;top:490px;width:1px;height:20px;background:#f4f4f4'></div>
<div class='a' style='left:809.5px;top:490px;width:1px;height:20px;background:#f4f4f4'></div>
<div class='a' style='left:916px;top:490px;width:1px;height:20px;background:#f4f4f4'></div>
<div class='a' style='left:1033px;top:490px;width:1px;height:20px;background:#f4f4f4'></div>
<div class='a' style='left:1178px;top:490px;width:1px;height:20px;background:#f4f4f4'></div>
<div class='a' style='left:1300px;top:490px;width:1px;height:20px;background:#f4f4f4'></div>
<div class='cell' style='left:178px;top:490px;width:180px;overflow:hidden;font-weight:normal;'>JEFFERSON, GEORGE</div>
<div class='cell' style='left:360.5px;top:490px;width:85.5px;overflow:hidden;font-weight:normal;'>8998</div>
<div class='cell' style='left:448.5px;top:490px;width:71.5px;overflow:hidden;font-weight:normal;'>N</div>
<div class='cell' style='left:522.5px;top:490px;width:77.5px;overflow:hidden;font-weight:normal;'>SPECIMENRE</div>
<div class='cell' style='left:602.5px;top:490px;width:68.0px;overflow:hidden;font-weight:normal;'>11/18/2016</div>
<div class='cell' style='left:673.0px;top:490px;width:37.0px;overflow:hidden;font-weight:normal;'>14:08</div>
<div class='cell' style='left:712.5px;top:490px;width:97.0px;overflow:hidden;font-weight:normal;'>URINE</div>
<div class='cell' style='left:812.0px;top:490px;width:104.0px;overflow:hidden;font-weight:normal;'>CANNABIS</div>
<div class='cell' style='left:918.5px;top:490px;width:114.5px;overflow:hidden;font-weight:normal;letter-spacing:0.3px;'>426925892446067</div>
<div class='cell' style='left:1035.5px;top:490px;width:142.5px;overflow:hidden;font-weight:normal;'>ROUTINE</div>
<div class='cell' style='left:1180.5px;top:490px;width:119.5px;overflow:hidden;font-weight:normal;'>SMITH, JIM</div>
<div class='cell' style='left:1302.5px;top:490px;width:595.5px;overflow:hidden;font-weight:normal;'>049</div>
<div class='a' style='left:176px;top:510px;width:1722px;height:20px;background:#e9f0fa;border-bottom:1px solid #f1f1f1'></div>
<div class='a' style='left:163px;top:510px;width:13px;height:20px;background:#e6e6e6;border-bottom:1px solid #c8c8c8;border-right:1px solid #c8c8c8'></div>
<div class='a' style='left:358px;top:510px;width:1px;height:20px;background:#f8fbff'></div>
<div class='a' style='left:446px;top:510px;width:1px;height:20px;background:#f8fbff'></div>
<div class='a' style='left:520px;top:510px;width:1px;height:20px;background:#f8fbff'></div>
<div class='a' style='left:600px;top:510px;width:1px;height:20px;background:#f8fbff'></div>
<div class='a' style='left:670.5px;top:510px;width:1px;height:20px;background:#f8fbff'></div>
<div class='a' style='left:710px;top:510px;width:1px;height:20px;background:#f8fbff'></div>
<div class='a' style='left:809.5px;top:510px;width:1px;height:20px;background:#f8fbff'></div>
<div class='a' style='left:916px;top:510px;width:1px;height:20px;background:#f8fbff'></div>
<div class='a' style='left:1033px;top:510px;width:1px;height:20px;background:#f8fbff'></div>
<div class='a' style='left:1178px;top:510px;width:1px;height:20px;background:#f8fbff'></div>
<div class='a' style='left:1300px;top:510px;width:1px;height:20px;background:#f8fbff'></div>
<div class='cell' style='left:178px;top:510px;width:180px;overflow:hidden;font-weight:normal;'>JEFFERSON, GEORGE</div>
<div class='cell' style='left:360.5px;top:510px;width:85.5px;overflow:hidden;font-weight:normal;'>8998</div>
<div class='cell' style='left:448.5px;top:510px;width:71.5px;overflow:hidden;font-weight:normal;'>N</div>
<div class='cell' style='left:522.5px;top:510px;width:77.5px;overflow:hidden;font-weight:normal;'>SPECIMENRE</div>
<div class='cell' style='left:602.5px;top:510px;width:68.0px;overflow:hidden;font-weight:normal;'>11/18/2016</div>
<div class='cell' style='left:673.0px;top:510px;width:37.0px;overflow:hidden;font-weight:normal;'>14:08</div>
<div class='cell' style='left:712.5px;top:510px;width:97.0px;overflow:hidden;font-weight:normal;'>URINE</div>
<div class='cell' style='left:812.0px;top:510px;width:104.0px;overflow:hidden;font-weight:normal;'>COCA</div>
<div class='cell' style='left:918.5px;top:510px;width:114.5px;overflow:hidden;font-weight:normal;letter-spacing:0.3px;'>426925892446067</div>
<div class='cell' style='left:1035.5px;top:510px;width:142.5px;overflow:hidden;font-weight:normal;'>ROUTINE</div>
<div class='cell' style='left:1180.5px;top:510px;width:119.5px;overflow:hidden;font-weight:normal;'>SMITH, JIM</div>
<div class='cell' style='left:1302.5px;top:510px;width:595.5px;overflow:hidden;font-weight:normal;'>050</div>
<div class='a' style='left:176px;top:530px;width:1722px;height:20px;background:#fbfbfb;border-bottom:1px solid #f1f1f1'></div>
<div class='a' style='left:163px;top:530px;width:13px;height:20px;background:#e6e6e6;border-bottom:1px solid #c8c8c8;border-right:1px solid #c8c8c8'></div>
<div class='a' style='left:358px;top:530px;width:1px;height:20px;background:#f4f4f4'></div>
<div class='a' style='left:446px;top:530px;width:1px;height:20px;background:#f4f4f4'></div>
<div class='a' style='left:520px;top:530px;width:1px;height:20px;background:#f4f4f4'></div>
<div class='a' style='left:600px;top:530px;width:1px;height:20px;background:#f4f4f4'></div>
<div class='a' style='left:670.5px;top:530px;width:1px;height:20px;background:#f4f4f4'></div>
<div class='a' style='left:710px;top:530px;width:1px;height:20px;background:#f4f4f4'></div>
<div class='a' style='left:809.5px;top:530px;width:1px;height:20px;background:#f4f4f4'></div>
<div class='a' style='left:916px;top:530px;width:1px;height:20px;background:#f4f4f4'></div>
<div class='a' style='left:1033px;top:530px;width:1px;height:20px;background:#f4f4f4'></div>
<div class='a' style='left:1178px;top:530px;width:1px;height:20px;background:#f4f4f4'></div>
<div class='a' style='left:1300px;top:530px;width:1px;height:20px;background:#f4f4f4'></div>
<div class='cell' style='left:178px;top:530px;width:180px;overflow:hidden;font-weight:normal;'>JEFFERSON, GEORGE</div>
<div class='cell' style='left:360.5px;top:530px;width:85.5px;overflow:hidden;font-weight:normal;'>8998</div>
<div class='cell' style='left:448.5px;top:530px;width:71.5px;overflow:hidden;font-weight:normal;'>N</div>
<div class='cell' style='left:522.5px;top:530px;width:77.5px;overflow:hidden;font-weight:normal;'>SPECIMENRE</div>
<div class='cell' style='left:602.5px;top:530px;width:68.0px;overflow:hidden;font-weight:normal;'>11/18/2016</div>
<div class='cell' style='left:673.0px;top:530px;width:37.0px;overflow:hidden;font-weight:normal;'>14:08</div>
<div class='cell' style='left:712.5px;top:530px;width:97.0px;overflow:hidden;font-weight:normal;'>URINE</div>
<div class='cell' style='left:812.0px;top:530px;width:104.0px;overflow:hidden;font-weight:normal;'>OPIAT</div>
<div class='cell' style='left:918.5px;top:530px;width:114.5px;overflow:hidden;font-weight:normal;letter-spacing:0.3px;'>426925892446067</div>
<div class='cell' style='left:1035.5px;top:530px;width:142.5px;overflow:hidden;font-weight:normal;'>ROUTINE</div>
<div class='cell' style='left:1180.5px;top:530px;width:119.5px;overflow:hidden;font-weight:normal;'>SMITH, JIM</div>
<div class='cell' style='left:1302.5px;top:530px;width:595.5px;overflow:hidden;font-weight:normal;'>051</div>
<div class='a' style='left:176px;top:550px;width:1722px;height:20px;background:#e9f0fa;border-bottom:1px solid #f1f1f1'></div>
<div class='a' style='left:163px;top:550px;width:13px;height:20px;background:#e6e6e6;border-bottom:1px solid #c8c8c8;border-right:1px solid #c8c8c8'></div>
<div class='a' style='left:358px;top:550px;width:1px;height:20px;background:#f8fbff'></div>
<div class='a' style='left:446px;top:550px;width:1px;height:20px;background:#f8fbff'></div>
<div class='a' style='left:520px;top:550px;width:1px;height:20px;background:#f8fbff'></div>
<div class='a' style='left:600px;top:550px;width:1px;height:20px;background:#f8fbff'></div>
<div class='a' style='left:670.5px;top:550px;width:1px;height:20px;background:#f8fbff'></div>
<div class='a' style='left:710px;top:550px;width:1px;height:20px;background:#f8fbff'></div>
<div class='a' style='left:809.5px;top:550px;width:1px;height:20px;background:#f8fbff'></div>
<div class='a' style='left:916px;top:550px;width:1px;height:20px;background:#f8fbff'></div>
<div class='a' style='left:1033px;top:550px;width:1px;height:20px;background:#f8fbff'></div>
<div class='a' style='left:1178px;top:550px;width:1px;height:20px;background:#f8fbff'></div>
<div class='a' style='left:1300px;top:550px;width:1px;height:20px;background:#f8fbff'></div>
<div class='cell' style='left:178px;top:550px;width:180px;overflow:hidden;font-weight:normal;'>JEFFERSON, GEORGE</div>
<div class='cell' style='left:360.5px;top:550px;width:85.5px;overflow:hidden;font-weight:normal;'>8998</div>
<div class='cell' style='left:448.5px;top:550px;width:71.5px;overflow:hidden;font-weight:normal;'>N</div>
<div class='cell' style='left:522.5px;top:550px;width:77.5px;overflow:hidden;font-weight:normal;'>SPECIMENRE</div>
<div class='cell' style='left:602.5px;top:550px;width:68.0px;overflow:hidden;font-weight:normal;'>11/18/2016</div>
<div class='cell' style='left:673.0px;top:550px;width:37.0px;overflow:hidden;font-weight:normal;'>14:08</div>
<div class='cell' style='left:712.5px;top:550px;width:97.0px;overflow:hidden;font-weight:normal;'>URINE</div>
<div class='cell' style='left:812.0px;top:550px;width:104.0px;overflow:hidden;font-weight:normal;'>TRAMA</div>
<div class='cell' style='left:918.5px;top:550px;width:114.5px;overflow:hidden;font-weight:normal;letter-spacing:0.3px;'>426925892446067</div>
<div class='cell' style='left:1035.5px;top:550px;width:142.5px;overflow:hidden;font-weight:normal;'>ROUTINE</div>
<div class='cell' style='left:1180.5px;top:550px;width:119.5px;overflow:hidden;font-weight:normal;'>SMITH, JIM</div>
<div class='cell' style='left:1302.5px;top:550px;width:595.5px;overflow:hidden;font-weight:normal;'>052</div>
<svg class='a' style='left:166px;top:293px' width='8' height='13'><path d='M1 1 L7 6.5 L1 12 Z' fill='#000'/></svg>
<div class='a' style='left:1900px;top:269px;width:16px;height:710px;background:#f0f0f0'></div>
<div class='a' style='left:1900px;top:286px;width:15px;height:17px;background:#cdcdcd'></div>
<svg class='a' style='left:1903px;top:274px' width='10' height='7'><path d='M1 6 L5 2 L9 6' fill='none' stroke='#555' stroke-width='2'/></svg>
<svg class='a' style='left:1903px;top:968px' width='10' height='7'><path d='M1 1 L5 5 L9 1' fill='none' stroke='#555' stroke-width='2'/></svg>
<svg class='a' style='left:680px;top:895px' width='560' height='70' viewBox='680 895 560 70'>
<text x='686' y='946.3' font-family='Liberation Sans' font-weight='bold' font-size='52.5' fill='#ebebeb' stroke='#ebebeb' stroke-width='1.6' textLength='469' lengthAdjust='spacingAndGlyphs'>SoftwareSuggest</text>
<text x='1154' y='946.3' font-family='Liberation Sans' font-weight='bold' font-size='35' fill='#ebebeb' stroke='#ebebeb' stroke-width='0.8' textLength='79' lengthAdjust='spacingAndGlyphs'>.com</text>
</svg>
<svg class='a' style='left:160px;top:980px' width='600' height='24' viewBox='160 980 600 24'><path d='M253 983 L256 1000.5 L328.5 1000.5 L331.5 983 Z' fill='#e6e6e6' stroke='#5a5a5a' stroke-width='1.1' stroke-linejoin='round'/><path d='M331.5 983 L334.5 1000.5 L419.6 1000.5 L422.6 983 Z' fill='#e6e6e6' stroke='#5a5a5a' stroke-width='1.1' stroke-linejoin='round'/><path d='M422.6 983 L425.6 1000.5 L487.3 1000.5 L490.3 983 Z' fill='#e6e6e6' stroke='#5a5a5a' stroke-width='1.1' stroke-linejoin='round'/><path d='M490.3 983 L493.3 1000.5 L551 1000.5 L554 983 Z' fill='#e6e6e6' stroke='#5a5a5a' stroke-width='1.1' stroke-linejoin='round'/><path d='M554 983 L557 1000.5 L619.3 1000.5 L622.3 983 Z' fill='#e6e6e6' stroke='#5a5a5a' stroke-width='1.1' stroke-linejoin='round'/><path d='M622.3 983 L625.3 1000.5 L684 1000.5 L687 983 Z' fill='#e6e6e6' stroke='#5a5a5a' stroke-width='1.1' stroke-linejoin='round'/><path d='M687 983 L690 1000.5 L732.8 1000.5 L735.8 983 Z' fill='#e6e6e6' stroke='#5a5a5a' stroke-width='1.1' stroke-linejoin='round'/><path d='M168 982 L173 1000.5 L250 1000.5 L253 982 Z' fill='#fff' stroke='none'/><path d='M161 983 H168 L173 1000.5 H250 L253 983' fill='none' stroke='#5a5a5a' stroke-width='1.3' stroke-linejoin='round'/><rect x='174' y='982' width='73' height='1.8' fill='#d4dbe6'/></svg>
<div class='tab' style='left:175.3px'>PatientName</div>
<div class='tab' style='left:257.5px'>PatientCode</div>
<div class='tab' style='left:335.5px'>CollectionDate</div>
<div class='tab' style='left:426.6px'>TestName</div>
<div class='tab' style='left:494.9px'>TestCode</div>
<div class='tab' style='left:558px'>OrderedBy</div>
<div class='tab' style='left:626.3px'>PRIORITY</div>
<div class='tab' style='left:691px'>REQID</div>
<div class='a' style='left:0;top:1007px;width:1919px;height:20px;background:#f0f0f0;border-top:1px solid #e0e0e0'></div>
<div class='a' style='left:0;top:1026px;width:1919px;height:1px;background:#000'></div>
<div class='a' style='left:378px;top:1009px;width:1px;height:16px;background:#d0d0d0'></div>
<div class='a' style='left:548px;top:1009px;width:1px;height:16px;background:#d0d0d0'></div>
<div class='a' style='left:448px;top:1009px;width:1px;height:16px;background:#d0d0d0'></div>
<div class='a' style='left:428px;top:1009px;height:17px;line-height:17px;font-size:12px'>JIM</div>
</body></html>
